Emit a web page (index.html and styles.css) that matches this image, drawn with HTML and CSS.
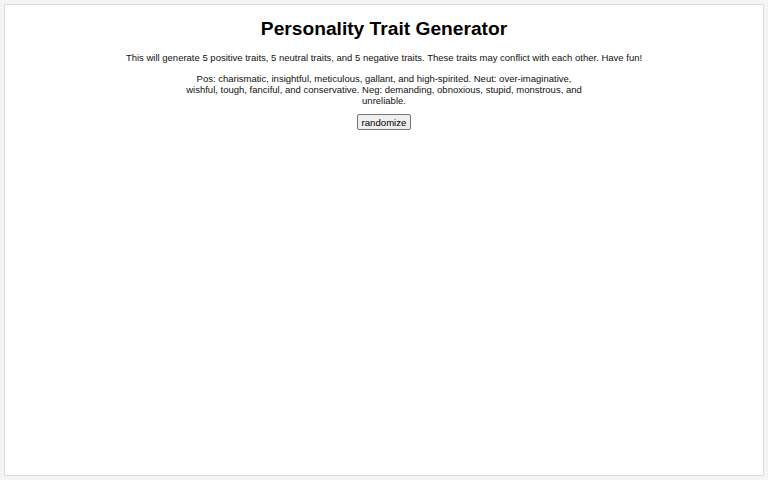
FILE: index.html
```html
<!DOCTYPE html>
<html lang="en">
<head>
    <meta charset="UTF-8">
    <title>Personality Trait Generator</title>
    <link rel="stylesheet" href="styles.css">
</head>
<body>
    <div id="container">
        <h1>Personality Trait Generator</h1>
        <p class="intro">This will generate 5 positive traits, 5 neutral traits, and 5 negative traits. These traits may conflict with each other. Have fun!</p>
        <p id="traits">Pos: charismatic, insightful, meticulous, gallant, and high-spirited. Neut: over-imaginative, wishful, tough, fanciful, and conservative. Neg: demanding, obnoxious, stupid, monstrous, and unreliable.</p>
        <button id="randomize" type="button">randomize</button>
    </div>
</body>
</html>
```
FILE: styles.css
```css
html, body {
    height: 100%;
    margin: 0;
    padding: 0;
}

body {
    background: #f4f4f4;
    font-family: "Liberation Sans", Arial, sans-serif;
    padding: 4px;
    box-sizing: border-box;
}

#container {
    height: 100%;
    box-sizing: border-box;
    background: #ffffff;
    border: 1px solid #dddddd;
    display: flex;
    flex-direction: column;
    align-items: center;
    text-align: center;
    padding-top: 12px;
}

h1 {
    margin: 0 0 12px 0;
    font-size: 19.2px;
    font-weight: bold;
    color: #000;
    line-height: 23px;
}

p {
    margin: 0 0 10px 0;
    font-size: 9.5px;
    line-height: 11px;
    color: #111;
}

#traits {
    max-width: 400px;
    margin-bottom: 8px;
}

#randomize {
    font-family: "Liberation Sans", Arial, sans-serif;
    font-size: 9.6px;
    padding: 2px 4px 1px 4px;
    background: #efefef;
    border: 1px solid #767676;
    border-radius: 2px;
    color: #000;
}
```
